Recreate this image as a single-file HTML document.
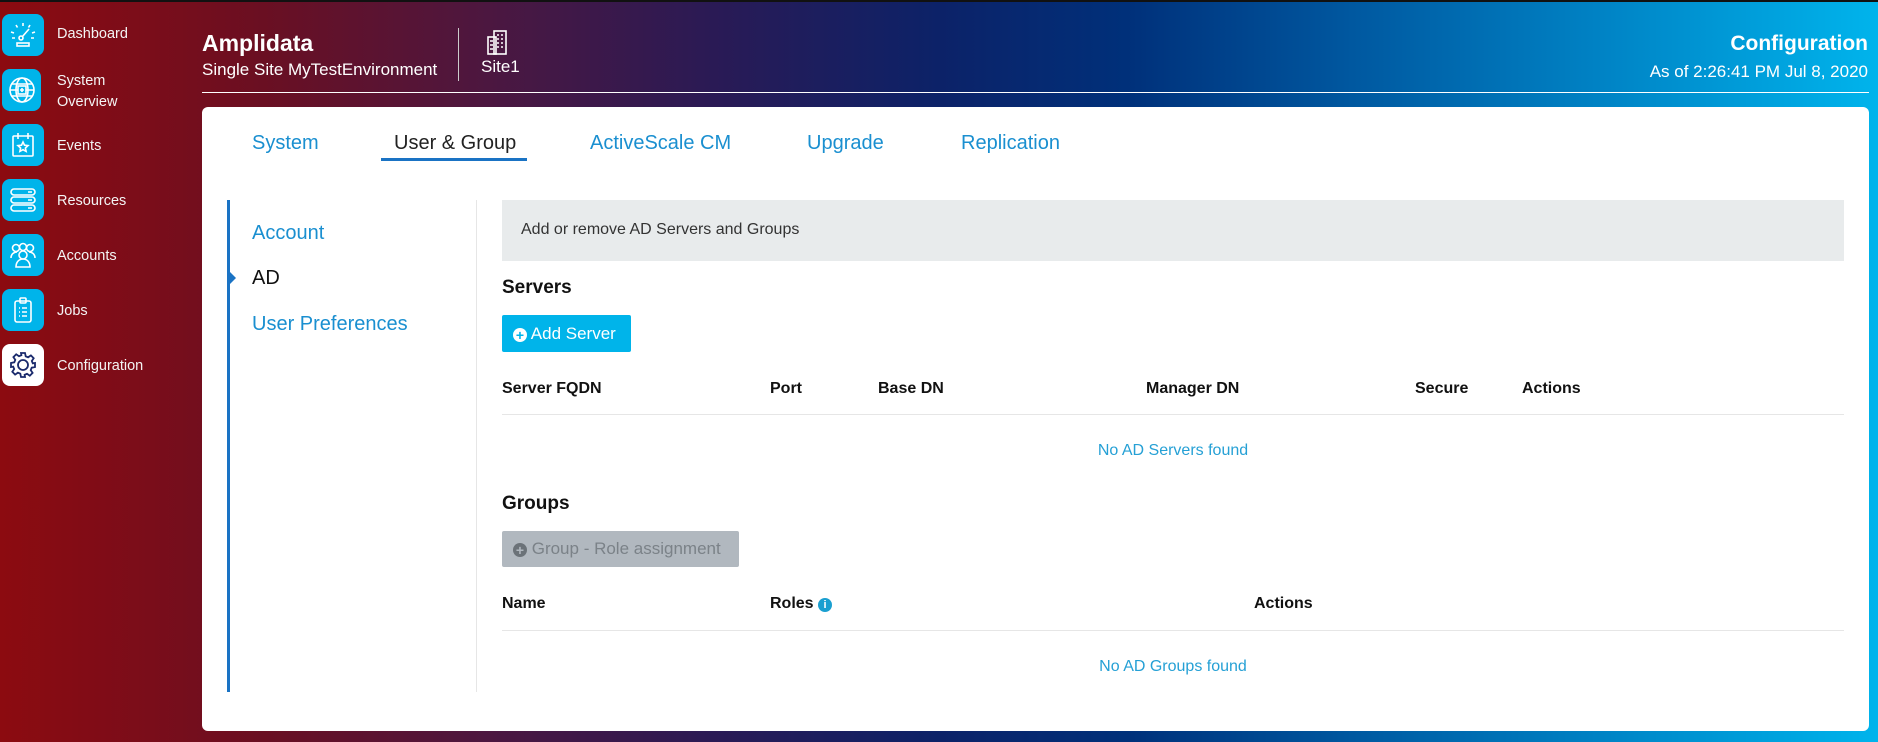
<!DOCTYPE html>
<html><head><meta charset="utf-8"><style>
*{margin:0;padding:0;box-sizing:border-box}
body{width:1878px;height:742px;overflow:hidden;font-family:"Liberation Sans",sans-serif;position:relative;
background:linear-gradient(90deg,#8c0b10 0%,#7a0d1a 8%,#6a0f22 14%,#4c1740 26%,#2a1a55 38%,#0c2268 50%,#00307a 60%,#0058a0 72%,#0082c4 85%,#00b4ec 100%);border-top:2px solid #111}
.a{position:absolute}
.ic{position:absolute;left:2px;width:42px;height:42px;border-radius:8px;background:#00b4ea;display:flex;align-items:center;justify-content:center}
.lb{position:absolute;left:57px;color:#f4f4f4;font-size:14.5px;line-height:18px}
.tab{position:absolute;top:130px;font-size:20px;color:#1a8fd0}
.nav{position:absolute;left:252px;font-size:20px;color:#1a8fd0}
.th{position:absolute;font-size:16px;font-weight:bold;color:#111}
.empty{position:absolute;font-size:16px;color:#25a0d5;width:400px;text-align:center;left:973px}
</style></head><body>
<div class="ic" style="top:12px"><svg width="30" height="30" viewBox="0 0 30 30" fill="none" stroke="#fff" stroke-width="1.6"><path d="M15 3v3M8 5l1.5 2.5M22 5l-1.5 2.5M3 12l3 1M27 12l-3 1M4 18h3M23 18h3"/><circle cx="13" cy="18" r="2"/><path d="M14.5 16.5L21 9"/><rect x="9" y="23" width="12" height="3"/></svg></div>
<div class="lb" style="top:23px">Dashboard</div>
<div class="ic" style="top:67px;width:39px"><svg width="30" height="30" viewBox="0 0 30 30" fill="none" stroke="#fff" stroke-width="1.6"><circle cx="15" cy="15" r="12"/><ellipse cx="15" cy="15" rx="6" ry="12"/><path d="M3 15h24M5 9h20M5 21h20"/><rect x="11" y="11" width="8" height="8" fill="#00b4ea"/><path d="M15 13v4M13 15h4"/></svg></div>
<div class="lb" style="top:69px;line-height:21px">System<br>Overview</div>
<div class="ic" style="top:122px"><svg width="30" height="30" viewBox="0 0 30 30" fill="none" stroke="#fff" stroke-width="1.6"><rect x="5" y="6" width="20" height="20" rx="1"/><path d="M10 3v6M20 3v6"/><path d="M15 12l1.5 3.2 3.5.4-2.6 2.4.7 3.4-3.1-1.7-3.1 1.7.7-3.4-2.6-2.4 3.5-.4z"/></svg></div>
<div class="lb" style="top:135px">Events</div>
<div class="ic" style="top:177px"><svg width="30" height="30" viewBox="0 0 30 30" fill="none" stroke="#fff" stroke-width="1.6"><rect x="3" y="4" width="24" height="6" rx="3"/><rect x="3" y="12" width="24" height="6" rx="3"/><rect x="3" y="20" width="24" height="6" rx="3"/><path d="M20 7h4M20 15h4M20 23h4"/></svg></div>
<div class="lb" style="top:190px">Resources</div>
<div class="ic" style="top:232px"><svg width="30" height="30" viewBox="0 0 30 30" fill="none" stroke="#fff" stroke-width="1.6"><circle cx="8" cy="8" r="3.5"/><circle cx="15" cy="7" r="3.5"/><circle cx="22" cy="8" r="3.5"/><path d="M3 18c0-4 3-6 6-6M27 18c0-4-3-6-6-6"/><circle cx="15" cy="15" r="4"/><path d="M8 27c0-5 3-8 7-8s7 3 7 8z"/></svg></div>
<div class="lb" style="top:245px">Accounts</div>
<div class="ic" style="top:287px"><svg width="30" height="30" viewBox="0 0 30 30" fill="none" stroke="#fff" stroke-width="1.6"><rect x="7" y="6" width="16" height="21" rx="2"/><rect x="12" y="3" width="6" height="5" rx="1"/><path d="M11 13h1M14 13h5M11 17h1M14 17h5M11 21h1M14 21h5"/></svg></div>
<div class="lb" style="top:300px">Jobs</div>
<div class="ic" style="top:342px;background:#fff"><svg width="30" height="30" viewBox="0 0 30 30" fill="none" stroke="#1a2a6c" stroke-width="1.8"><path d="M13 3h4l.7 3.3 2.4 1 2.8-1.9 2.8 2.8-1.9 2.8 1 2.4L27 13v4l-3.3.7-1 2.4 1.9 2.8-2.8 2.8-2.8-1.9-2.4 1L17 27h-4l-.7-3.3-2.4-1-2.8 1.9-2.8-2.8 1.9-2.8-1-2.4L3 17v-4l3.3-.7 1-2.4-1.9-2.8 2.8-2.8 2.8 1.9 2.4-1z"/><circle cx="15" cy="15" r="5"/></svg></div>
<div class="lb" style="top:355px">Configuration</div>

<div class="a" style="left:202px;top:28px;font-size:23px;font-weight:bold;color:#fff">Amplidata</div>
<div class="a" style="left:202px;top:58px;font-size:17px;color:#fff">Single Site MyTestEnvironment</div>
<div class="a" style="left:458px;top:26px;width:1px;height:53px;background:#ccc"></div>
<svg class="a" style="left:486px;top:27px" width="24" height="26" viewBox="0 0 24 26" fill="none" stroke="#fff" stroke-width="1.6"><rect x="2" y="8" width="8" height="17"/><rect x="8" y="2" width="12" height="23"/><path d="M11 6h2M15 6h2M11 10h2M15 10h2M11 14h2M15 14h2M11 18h2M15 18h2M4 12h3M4 16h3M4 20h3"/></svg>
<div class="a" style="left:481px;top:55px;font-size:17px;color:#fff">Site1</div>
<div class="a" style="right:10px;top:30px;font-size:21px;font-weight:bold;color:#fff;text-align:right">Configuration</div>
<div class="a" style="right:10px;top:60px;font-size:17px;color:#fff;text-align:right">As of 2:26:41 PM Jul 8, 2020</div>
<div class="a" style="left:202px;top:90px;width:1667px;height:1px;background:#fff"></div>

<div class="a" style="left:202px;top:105px;width:1667px;height:624px;background:#fff;border-radius:6px"></div>
<div class="tab" style="left:252px">System</div>
<div class="tab" style="left:394px;color:#222">User &amp; Group</div>
<div class="a" style="left:381px;top:156px;width:146px;height:3px;background:#1a73c4"></div>
<div class="tab" style="left:590px">ActiveScale CM</div>
<div class="tab" style="left:807px">Upgrade</div>
<div class="tab" style="left:961px">Replication</div>

<div class="a" style="left:227px;top:198px;width:3px;height:492px;background:#1a73c4"></div>
<div class="a" style="left:230px;top:270px;width:0;height:0;border-top:6px solid transparent;border-bottom:6px solid transparent;border-left:6px solid #1a73c4"></div>
<div class="nav" style="top:220px">Account</div>
<div class="nav" style="top:265px;color:#111">AD</div>
<div class="nav" style="top:311px">User Preferences</div>
<div class="a" style="left:476px;top:198px;width:1px;height:492px;background:#e6e6e6"></div>

<div class="a" style="left:502px;top:198px;width:1342px;height:61px;background:#e8ebec"></div>
<div class="a" style="left:521px;top:219px;font-size:16px;color:#333">Add or remove AD Servers and Groups</div>
<div class="a" style="left:502px;top:275px;font-size:19px;font-weight:bold;color:#111">Servers</div>
<div class="a" style="left:502px;top:313px;width:129px;height:37px;background:#00b4ea;border-radius:2px;color:#fff;font-size:17px;line-height:37px;padding-left:11px"><span style="display:inline-block;width:14px;height:14px;border-radius:50%;background:#fff;color:#00b4ea;font-size:14px;line-height:14px;text-align:center;font-weight:bold;vertical-align:-1px">+</span> Add Server</div>
<div class="th" style="left:502px;top:378px">Server FQDN</div>
<div class="th" style="left:770px;top:378px">Port</div>
<div class="th" style="left:878px;top:378px">Base DN</div>
<div class="th" style="left:1146px;top:378px">Manager DN</div>
<div class="th" style="left:1415px;top:378px">Secure</div>
<div class="th" style="left:1522px;top:378px">Actions</div>
<div class="a" style="left:502px;top:412px;width:1342px;height:1px;background:#e6e6e6"></div>
<div class="empty" style="top:440px">No AD Servers found</div>

<div class="a" style="left:502px;top:491px;font-size:19px;font-weight:bold;color:#111">Groups</div>
<div class="a" style="left:502px;top:529px;width:237px;height:36px;background:#b1b8bf;border-radius:2px;color:#7b8288;font-size:17px;line-height:36px;padding-left:11px"><span style="display:inline-block;width:14px;height:14px;border-radius:50%;background:#6b7278;color:#b1b8bf;font-size:14px;line-height:14px;text-align:center;font-weight:bold;vertical-align:-1px">+</span> Group - Role assignment</div>
<div class="th" style="left:502px;top:593px">Name</div>
<div class="th" style="left:770px;top:593px">Roles <span style="display:inline-block;width:14px;height:14px;border-radius:50%;background:#1a9fd0;color:#fff;font-size:11px;line-height:14px;text-align:center;vertical-align:0">i</span></div>
<div class="th" style="left:1254px;top:593px">Actions</div>
<div class="a" style="left:502px;top:628px;width:1342px;height:1px;background:#e6e6e6"></div>
<div class="empty" style="top:656px">No AD Groups found</div>
</body></html>
